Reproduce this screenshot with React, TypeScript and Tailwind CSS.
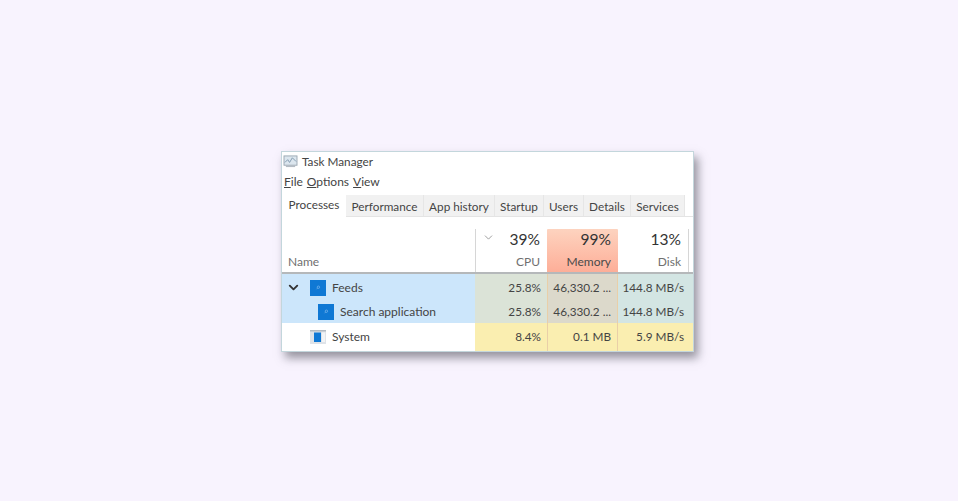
import { ChevronDown } from 'lucide-react'

const tabs = [
  { label: 'Performance', w: 'w-[78px]' },
  { label: 'App history', w: 'w-[71px]' },
  { label: 'Startup', w: 'w-[49px]' },
  { label: 'Users', w: 'w-[40px]' },
  { label: 'Details', w: 'w-[47px]' },
  { label: 'Services', w: 'w-[54px]' },
]

function AppIcon() {
  return (
    <svg viewBox="0 0 16 16" className="w-4 h-4 shrink-0">
      <rect width="16" height="16" fill="#0f78d4" />
      <circle cx="8.4" cy="7.2" r="1.2" fill="none" stroke="#7cb8ee" strokeWidth="0.7" />
      <path d="M7.5 8.2 6.6 9.2" stroke="#7cb8ee" strokeWidth="0.7" />
    </svg>
  )
}

function SystemIcon() {
  return (
    <svg viewBox="0 0 16 14" className="w-4 h-[14px] shrink-0">
      <rect width="16" height="14" fill="#dfe3e8" />
      <rect x="0" y="0" width="16" height="1.5" fill="#b4bbc2" />
      <rect x="4" y="2.5" width="7" height="9.5" fill="#0f78d4" />
      <rect x="12" y="2.5" width="3" height="9.5" fill="#f2f4f6" />
    </svg>
  )
}

function TaskIcon() {
  return (
    <svg viewBox="0 0 16 14" className="w-[15px] h-[13px] shrink-0">
      <rect x="1" y="1" width="14" height="10" fill="#dce6ee" stroke="#9aa6b1" strokeWidth="1" />
      <path d="M2 8 5 5 7 8 10 3 14 7" fill="none" stroke="#7f98ae" strokeWidth="1" />
      <rect x="3" y="11" width="10" height="2" fill="#b4bcc4" />
    </svg>
  )
}

function HeaderCell({ pct, label, className }: { pct: string; label: string; className: string }) {
  return (
    <div className={`flex flex-col items-end justify-between pb-[1px] pr-[7px] ${className}`}>
      <span className="text-[15.5px] leading-[20px] text-[#333]">{pct}</span>
      <span className="text-[12px] leading-[18px]">{label}</span>
    </div>
  )
}

function Row({ name, icon, indent, chevron, cpu, mem, disk, nameBg, cpuBg, memBg, diskBg, height }: {
  name: string
  icon: React.ReactNode
  indent: string
  chevron?: boolean
  cpu: string
  mem: string
  disk: string
  nameBg: string
  cpuBg: string
  memBg: string
  diskBg: string
  height: string
}) {
  const cell = 'flex items-center justify-end whitespace-nowrap text-[11.75px] text-[#444]'
  return (
    <div className={`flex ${height}`}>
      <div className={`w-[193px] flex items-center ${indent} ${nameBg}`}>
        {chevron && <ChevronDown size={15} strokeWidth={3} className="text-[#333] -ml-[24px] mr-[9px]" />}
        {icon}
        <span className="ml-[6px] text-[12px] text-[#444]">{name}</span>
      </div>
      <div className={`w-[72px] pr-[6px] ${cell} ${cpuBg}`}>{cpu}</div>
      <div className={`w-[71px] pr-[6px] border-x border-[#e9cfa8] ${cell} ${memBg}`}>{mem}</div>
      <div className={`flex-1 pr-[9px] ${cell} ${diskBg}`}>{disk}</div>
    </div>
  )
}

export default function App() {
  return (
    <div className="min-h-[501px] bg-[#f8f3fe] pl-[281px] pt-[151px] font-['Lato',sans-serif]">
      <div className="w-[413px] h-[201px] flex flex-col bg-white border border-[#c3d6dc] shadow-[4px_6px_9px_rgba(70,70,80,0.55)]">
        <div className="h-[19px] flex items-center pl-[1px] gap-[4px] text-[11.75px] text-[#444]">
          <TaskIcon />
          <span>Task Manager</span>
        </div>
        <div className="h-[21px] flex items-center pl-[2px] gap-[4px] text-[12px] text-[#444]">
          <span><u>F</u>ile</span>
          <span><u>O</u>ptions</span>
          <span><u>V</u>iew</span>
        </div>
        <div className="h-[25px] flex items-end border-b border-[#e4e4e4] text-[11.75px] text-[#444] whitespace-nowrap">
          <div className="w-[64px] h-[25px] -mb-px bg-white text-center leading-[25px]">Processes</div>
          <div className="flex h-[21px] w-[339px] bg-[#f1f1f1]">
            {tabs.map((t) => (
              <div key={t.label} className={`${t.w} text-center leading-[23px] border-r border-[#e6e6e6]`}>{t.label}</div>
            ))}
          </div>
        </div>
        <div className="h-[57px] pt-[12px] flex border-b-2 border-[#b5b8ba] text-[#707070]">
          <div className="w-[193px] flex items-end pl-[6px] pb-[1px] text-[12px] leading-[18px]">Name</div>
          <div className="w-[72px] flex relative">
            <ChevronDown size={13} strokeWidth={1.5} className="absolute left-[7px] top-[2px] text-[#8a8a8a]" />
            <HeaderCell pct="39%" label="CPU" className="w-full border-l border-[#d6d6d6]" />
          </div>
          <HeaderCell pct="99%" label="Memory" className="w-[71px] rounded-t-[1px] bg-gradient-to-b from-[#fdd3bf] to-[#fdae98] text-[#4a4a4a]" />
          <HeaderCell pct="13%" label="Disk" className="w-[71px] border-r border-[#d6d6d6]" />
        </div>
        <Row
          name="Feeds" icon={<AppIcon />} indent="pl-[28px] pt-[2px]" chevron
          cpu="25.8%" mem="46,330.2 ..." disk="144.8 MB/s"
          nameBg="bg-[#cce6fb]" cpuBg="bg-[#dbe3d7] pt-[2px]" memBg="bg-[#dcd9cb] pt-[2px]" diskBg="bg-[#d3e5e3] pt-[2px]" height="h-[25px]"
        />
        <Row
          name="Search application" icon={<AppIcon />} indent="pl-[36px] pt-[2px]"
          cpu="25.8%" mem="46,330.2 ..." disk="144.8 MB/s"
          nameBg="bg-[#cce6fb]" cpuBg="bg-[#dbe3d7] pt-[2px]" memBg="bg-[#dcd9cb] pt-[2px]" diskBg="bg-[#d3e5e3] pt-[2px]" height="h-[24px]"
        />
        <Row
          name="System" icon={<SystemIcon />} indent="pl-[28px]"
          cpu="8.4%" mem="0.1 MB" disk="5.9 MB/s"
          nameBg="bg-white" cpuBg="bg-[#faeeb0]" memBg="bg-[#faeeb0]" diskBg="bg-[#faeeb0]" height="flex-1"
        />
      </div>
    </div>
  )
}
